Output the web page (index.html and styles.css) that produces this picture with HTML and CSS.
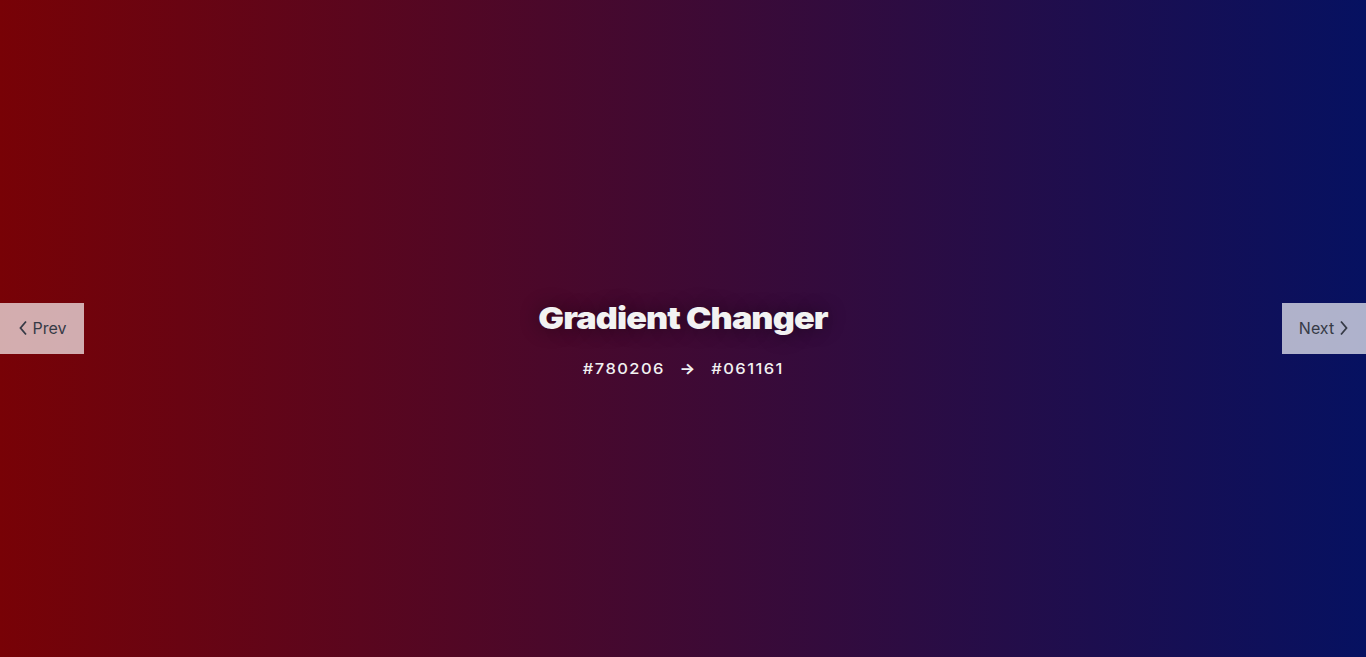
FILE: index.html
```html
<!DOCTYPE html>
<html lang="en">
<head>
  <meta charset="UTF-8">
  <title>Gradient Changer</title>
  <meta name="viewport" content="width=device-width, initial-scale=1.0">
  <link rel="stylesheet" href="styles.css">
</head>
<body>
  <button class="nav-btn prev" type="button">
    <svg width="10" height="16" viewBox="0 0 10 16"><path d="M8 1.5 2.5 8 8 14.5" fill="none" stroke="currentColor" stroke-width="1.8"/></svg>
    Prev
  </button>

  <main class="center">
    <h1 class="title">Gradient Changer</h1>
    <p class="codes">#780206 <span class="arrow">&rarr;</span> #061161</p>
  </main>

  <button class="nav-btn next" type="button">
    Next
    <svg width="10" height="16" viewBox="0 0 10 16"><path d="M2 1.5 7.5 8 2 14.5" fill="none" stroke="currentColor" stroke-width="1.8"/></svg>
  </button>
</body>
</html>
```

FILE: styles.css
```css
* {
  box-sizing: border-box;
}

body {
  margin: 0;
  height: 100vh;
  overflow: hidden;
  background: linear-gradient(to right, #780206, #061161);
  font-family: 'Inter', 'DejaVu Sans', sans-serif;
  display: flex;
  align-items: center;
  justify-content: space-between;
}

.center {
  flex: 1;
  text-align: center;
  color: #f2f2f2;
  padding-top: 20px;
}

.title {
  margin: 0;
  font-size: 30px;
  font-weight: 900;
  letter-spacing: -0.8px;
  transform: scaleX(1.14);
  text-shadow: 0 0 18px rgba(0, 0, 0, 0.45);
}

.codes {
  display: inline-block;
  margin: 23px 0 0;
  font-size: 15px;
  font-weight: 500;
  letter-spacing: 1.3px;
  word-spacing: 5px;
  transform: scaleX(1.1);
}

.arrow {
  margin: 0 3px;
  font-weight: 700;
}

.nav-btn {
  width: 84px;
  height: 51px;
  border: none;
  border-radius: 0;
  background: rgba(255, 255, 255, 0.68);
  color: #363a46;
  font-family: 'Inter', sans-serif;
  font-size: 16px;
  display: flex;
  align-items: center;
  justify-content: center;
  gap: 5px;
  padding-bottom: 2px;
  cursor: pointer;
}
```
